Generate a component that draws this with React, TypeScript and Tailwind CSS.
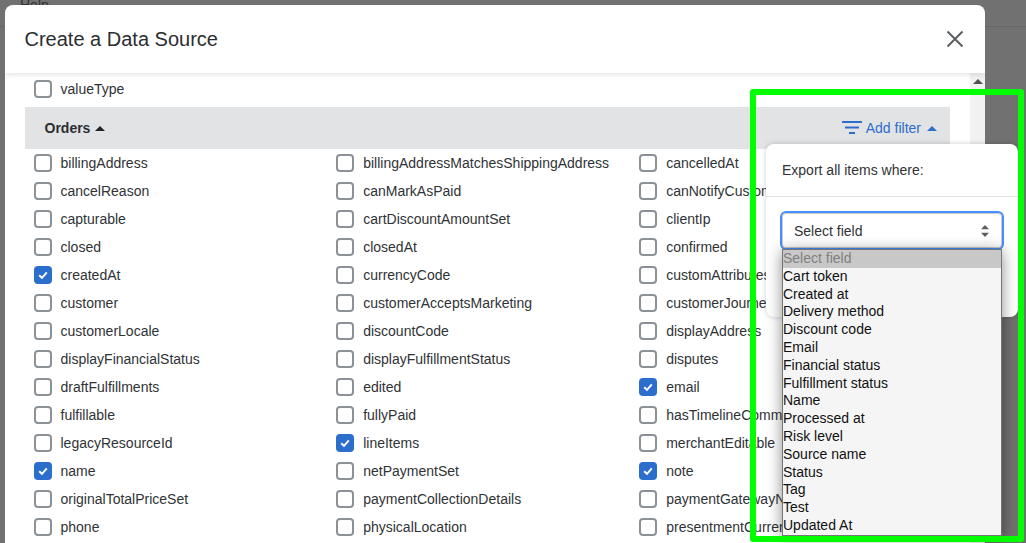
const rows: [string, boolean, string, boolean, string, boolean][] = [
  ["billingAddress", false, "billingAddressMatchesShippingAddress", false, "cancelledAt", false],
  ["cancelReason", false, "canMarkAsPaid", false, "canNotifyCustomer", false],
  ["capturable", false, "cartDiscountAmountSet", false, "clientIp", false],
  ["closed", false, "closedAt", false, "confirmed", false],
  ["createdAt", true, "currencyCode", false, "customAttributes", false],
  ["customer", false, "customerAcceptsMarketing", false, "customerJourneySummary", false],
  ["customerLocale", false, "discountCode", false, "displayAddress", false],
  ["displayFinancialStatus", false, "displayFulfillmentStatus", false, "disputes", false],
  ["draftFulfillments", false, "edited", false, "email", true],
  ["fulfillable", false, "fullyPaid", false, "hasTimelineComment", false],
  ["legacyResourceId", false, "lineItems", true, "merchantEditable", false],
  ["name", true, "netPaymentSet", false, "note", true],
  ["originalTotalPriceSet", false, "paymentCollectionDetails", false, "paymentGatewayNames", false],
  ["phone", false, "physicalLocation", false, "presentmentCurrencyCode", false],
];

const fields = [
  "Cart token",
  "Created at",
  "Delivery method",
  "Discount code",
  "Email",
  "Financial status",
  "Fulfillment status",
  "Name",
  "Processed at",
  "Risk level",
  "Source name",
  "Status",
  "Tag",
  "Test",
  "Updated At",
];

function Check({ label, checked }: { label: string; checked: boolean }) {
  return (
    <div className="flex h-7 items-center gap-[9px] whitespace-nowrap pl-[8.5px] text-[14px] text-[#303336]">
      {checked ? (
        <span className="flex h-[18px] w-[18px] shrink-0 items-center justify-center rounded-[4px] bg-[#2c6ecb]">
          <svg width="12" height="12" viewBox="0 0 12 12" fill="none">
            <path d="M2.2 6.2 5 8.8 9.8 3.4" stroke="#fff" strokeWidth="1.9" />
          </svg>
        </span>
      ) : (
        <span className="h-[18px] w-[18px] shrink-0 rounded-[4px] border-2 border-[#8c9196] bg-white" />
      )}
      <span>{label}</span>
    </div>
  );
}

function CaretUp({ className }: { className: string }) {
  return (
    <svg width="10" height="5" viewBox="0 0 10 5" className={className}>
      <path d="M0 5 5 0l5 5z" />
    </svg>
  );
}

export default function App() {
  return (
    <div className="relative h-[543px] w-[1026px] overflow-hidden bg-[#717171] font-['Liberation_Sans',sans-serif]">
      <div className="absolute left-0 right-0 top-0 h-[27px] border-b border-[#666666] pl-[20px] text-[14px] leading-[11px] text-[#333333]">
        Help
      </div>

      {/* modal */}
      <div className="relative ml-[5px] flex h-[600px] w-[980px] translate-y-[5px] flex-col overflow-hidden rounded-t-[8px] bg-white">
        <div className="relative z-10 flex h-[68px] shrink-0 items-center justify-between pl-[19.5px] pr-[20px] shadow-[0_1px_6px_rgba(0,0,0,0.14)]">
          <h1 className="text-[20px] font-normal text-[#2b2e31]">Create a Data Source</h1>
          <svg width="20" height="20" viewBox="0 0 20 20" fill="none">
            <path d="M2.5 2.5 17.5 17.5M17.5 2.5 2.5 17.5" stroke="#5c5f62" strokeWidth="2" />
          </svg>
        </div>

        <div className="flex min-h-0 flex-1">
          <div className="w-[965px] pl-[20px] pr-[20px]">
            <div className="h-[34px] pt-[2px]">
              <Check label="valueType" checked={false} />
            </div>
            <div className="flex h-[42px] items-center justify-between bg-[#e1e3e5] pl-[19.5px] pr-[13px] text-[14px]">
              <div className="flex items-center gap-[5px] font-bold text-[#2b2e31]">
                Orders
                <CaretUp className="fill-[#202223]" />
              </div>
              <div className="flex items-center text-[#2c6ecb]">
                <svg width="20" height="14" viewBox="0 0 20 14" className="mr-[4px] fill-[#2c6ecb]">
                  <rect x="0" y="0" width="20" height="2" />
                  <rect x="3" y="5.5" width="14" height="2" />
                  <rect x="7" y="11" width="6" height="2" />
                </svg>
                Add filter
                <CaretUp className="ml-[6px] fill-[#2c6ecb]" />
              </div>
            </div>
            <div className="grid grid-cols-[302.7px_303px_1fr]">
              {rows.map((r) => (
                <div className="contents" key={r[0]}>
                  <Check label={r[0]} checked={r[1]} />
                  <Check label={r[2]} checked={r[3]} />
                  <Check label={r[4]} checked={r[5]} />
                </div>
              ))}
            </div>
          </div>
          <div className="flex w-[15px] shrink-0 justify-center bg-[#f1f1f1] pt-[6px]">
            <CaretUp className="fill-[#505050]" />
          </div>
        </div>
      </div>

      {/* filter popover */}
      <div className="absolute left-[766px] top-[144px] h-[173px] w-[252px] rounded-[8px] bg-white shadow-[0_0_5px_rgba(0,0,0,0.2)]">
        <div className="flex h-[53px] items-center border-b border-[#e1e3e5] pl-[16px] text-[14px] text-[#303336]">
          Export all items where:
        </div>
        <div className="absolute left-[14px] top-[67px] flex h-[39px] w-[224px] items-center justify-between rounded-[6px] border-2 border-[#458fff] bg-white pl-[12px] pr-[12px] pt-[1px] text-[14px] text-[#303336] shadow-[inset_0_0_0_1px_#c9cccf]">
          Select field
          <svg width="10" height="14" viewBox="0 0 10 14" className="fill-[#5c5f62]">
            <path d="M5 1 9 5.2H1zM5 13 1 8.8h8z" />
          </svg>
        </div>
      </div>

      {/* native option list */}
      <div className="absolute left-[782px] top-[249px] w-[220px] border border-[#767676] bg-[#f5f5f5] text-[14px] leading-[17.8px] text-[#111111] shadow-[0_2px_14px_rgba(0,0,0,0.45)]">
        <div className="bg-[#c8c8c8] text-[#808080]">Select field</div>
        {fields.map((f) => (
          <div key={f}>{f}</div>
        ))}
      </div>

      {/* highlight frame */}
      <div className="absolute left-[750px] top-[89px] h-[453px] w-[274px] rounded-[3px] border-[6px] border-[#00ff00]" />
    </div>
  );
}
